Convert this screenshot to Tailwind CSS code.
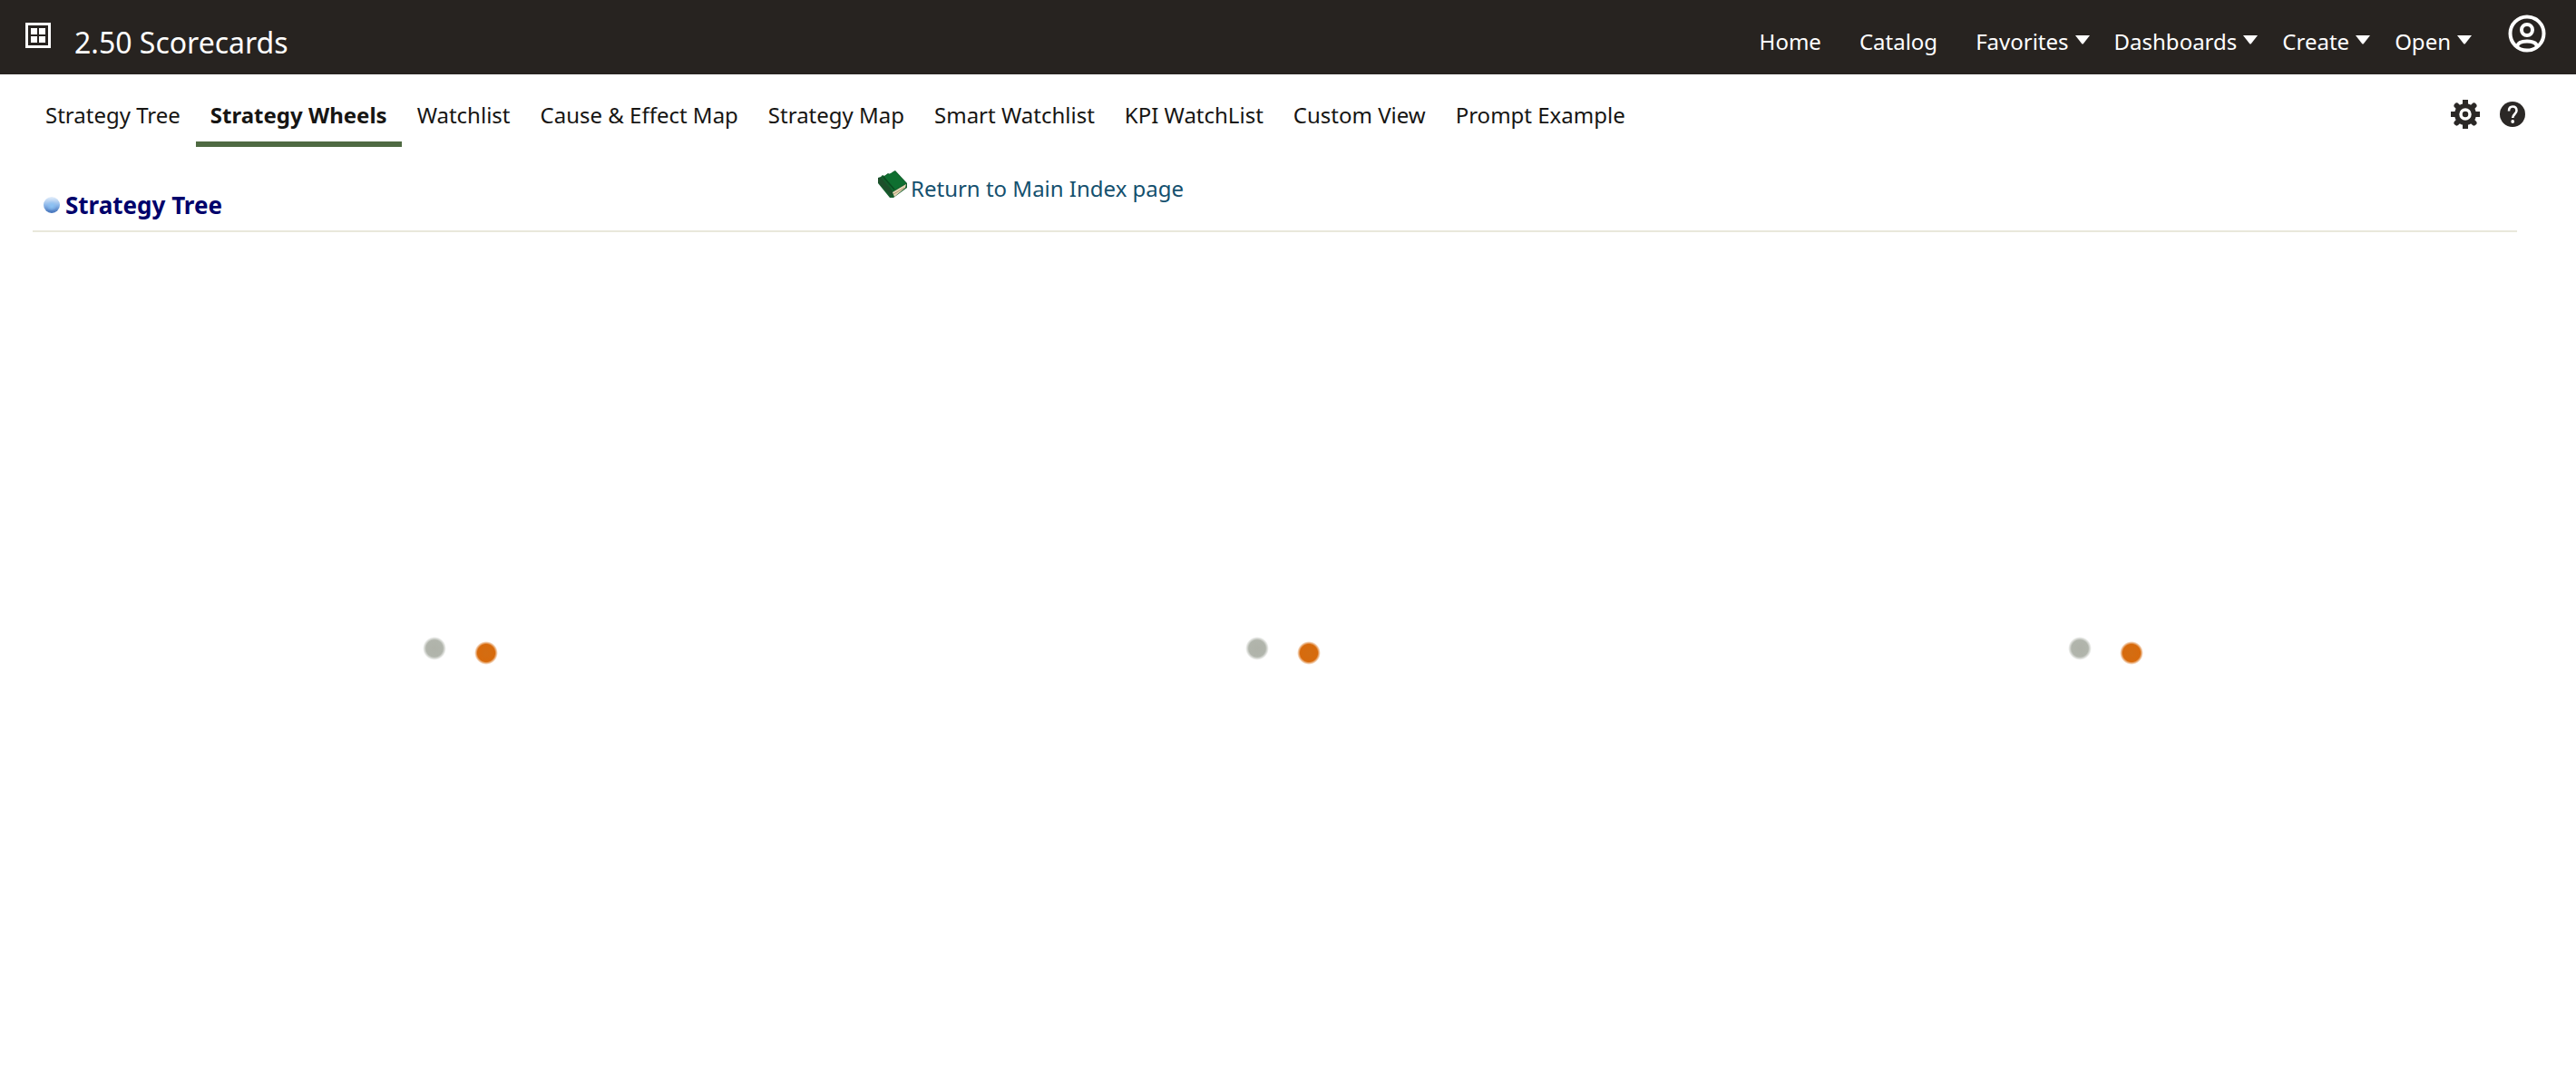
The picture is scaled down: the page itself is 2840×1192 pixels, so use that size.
<!DOCTYPE html>
<html lang="en">
<head>
<meta charset="UTF-8">
<meta name="viewport" content="width=device-width, initial-scale=1.0">
<title>2.50 Scorecards</title>
<script src="https://cdn.jsdelivr.net/npm/@tailwindcss/browser@4"></script>
</head>
<body class="min-h-screen flex flex-col bg-white text-[24px] leading-8 text-[#161513] font-['Noto_Sans',sans-serif]">

<!-- Header -->
<header class="h-[82px] flex items-start justify-between bg-[#272320] text-white pl-7 pr-[33px]">
  <div class="flex items-start">
    <button type="button" aria-label="Home" class="mt-[25px]">
      <svg class="size-[28px]" viewBox="0 0 28 28">
        <rect x="1.500" y="1.500" width="25" height="25" fill="none" stroke="#fff" stroke-width="3"/>
        <path d="M6 6h7v7H6zM15 6h7v7h-7zM6 15h7v7H6zM15 15h7v7h-7z" fill="#fff"/>
      </svg>
    </button>
    <h1 class="ml-[26px] mt-[27px] text-[32px] leading-10">2.50 Scorecards</h1>
  </div>
  <nav class="flex items-start">
    <a href="#" class="mt-[30px] mr-[42px]">Home</a>
    <a href="#" class="mt-[30px] mr-[42px]">Catalog</a>
    <button type="button" class="mt-[30px] mr-[27px] flex gap-[7px]">Favorites<svg class="w-4 h-[10px] mt-[9px]" viewBox="0 0 16 10"><path d="M0 0h16L9 9Q8 10 7 9Z" fill="#fff"/></svg></button>
    <button type="button" class="mt-[30px] mr-[27px] flex gap-[7px]">Dashboards<svg class="w-4 h-[10px] mt-[9px]" viewBox="0 0 16 10"><path d="M0 0h16L9 9Q8 10 7 9Z" fill="#fff"/></svg></button>
    <button type="button" class="mt-[30px] mr-[27px] flex gap-[7px]">Create<svg class="w-4 h-[10px] mt-[9px]" viewBox="0 0 16 10"><path d="M0 0h16L9 9Q8 10 7 9Z" fill="#fff"/></svg></button>
    <button type="button" class="mt-[30px] mr-[40px] flex gap-[7px]">Open<svg class="w-4 h-[10px] mt-[9px]" viewBox="0 0 16 10"><path d="M0 0h16L9 9Q8 10 7 9Z" fill="#fff"/></svg></button>
    <button type="button" aria-label="Account" class="mt-4">
      <svg class="size-[42px]" viewBox="0 0 42 42" fill="none" stroke="#fff" stroke-width="4">
        <circle cx="21" cy="21" r="18.500"/>
        <circle cx="21" cy="17" r="6"/>
        <path d="M10 35c1-4 5-5.500 11-5.500s10 1.500 11 5.500"/>
      </svg>
    </button>
  </nav>
</header>

<!-- Dashboard tabs -->
<div class="flex justify-between pl-[34px] pr-[54px]">
  <nav class="flex h-20 gap-px">
    <a href="#" class="px-4 pt-[29px]">Strategy Tree</a>
    <a href="#" class="px-4 pt-[29px] font-bold border-b-6 border-[#4f6a42]">Strategy Wheels</a>
    <a href="#" class="px-4 pt-[29px]">Watchlist</a>
    <a href="#" class="px-4 pt-[29px]">Cause &amp; Effect Map</a>
    <a href="#" class="px-4 pt-[29px]">Strategy Map</a>
    <a href="#" class="px-4 pt-[29px]">Smart Watchlist</a>
    <a href="#" class="px-4 pt-[29px]">KPI WatchList</a>
    <a href="#" class="px-4 pt-[29px]">Custom View</a>
    <a href="#" class="px-4 pt-[29px]">Prompt Example</a>
  </nav>
  <div class="flex items-start gap-5 pt-7">
    <button type="button" aria-label="Page options">
      <svg class="size-8" viewBox="0 0 32 32">
        <g stroke="#2b2826" stroke-width="6">
          <path d="M16 0v32M0 16h32"/>
          <path d="M6.500 6.500l19 19M25.500 6.500l-19 19" stroke-linecap="round"/>
        </g>
        <circle cx="16" cy="16" r="12" fill="#2b2826"/>
        <circle cx="16" cy="16" r="5" fill="#2b2826" stroke="#fff" stroke-width="3.500"/>
      </svg>
    </button>
    <button type="button" aria-label="Help">
      <svg class="size-8" viewBox="0 0 32 32">
        <circle cx="16" cy="16" r="14" fill="#2b2826"/>
        <path d="M12 12.500c0-3 1.500-5 4.200-5s4.300 1.800 4.300 4.500c0 3.500-4.300 4-4.300 8" fill="none" stroke="#fff" stroke-width="2.600"/>
        <circle cx="16.200" cy="24" r="1.900" fill="#fff"/>
      </svg>
    </button>
  </div>
</div>

<main class="flex-1 flex flex-col pl-9 pr-[65px]">
  <!-- Section heading -->
  <div class="grid grid-cols-3 h-[94px] pl-[18px] border-b-2 border-[#e9e8db]">
    <h2 class="-ml-[6px] flex items-center gap-[6px] pt-[36px] text-[26px] font-bold text-[#00006b]">
      <svg class="size-[18px]" viewBox="0 0 18 18">
        <defs>
          <linearGradient id="ball" x2="0" y2="1"><stop offset="0" stop-color="#e4effb"/><stop offset=".5" stop-color="#8fb9ea"/><stop offset="1" stop-color="#3f6fb8"/></linearGradient>
          <radialGradient id="glow" cy=".6"><stop offset="0" stop-color="#8cc4f5"/><stop offset="1" stop-color="#8cc4f5" stop-opacity="0"/></radialGradient>
        </defs>
        <circle cx="9" cy="9" r="9" fill="url(#ball)"/>
        <circle cx="9" cy="9" r="6" fill="url(#glow)"/>
      </svg>
      Strategy Tree
    </h2>
    <a href="#" class="flex items-start gap-1 pl-[7px] pt-[26px] text-[#14506e]">
      <svg class="w-8 h-[30px]" viewBox="0 0 32 30">
        <path d="M0 8l3-1 2-2 2 1 4-3 2 1 4-3 2-1 13 14v5L17 30h-4L0 14z" fill="#155c2c"/>
        <path d="M7 6L19 1l12 13-15 9z" fill="#0f6f30"/>
        <path d="M3 8l13 15-1 5L0 13V8z" fill="#1d4f2b"/>
        <path d="M6 7l12 14" stroke="#0b4a20" stroke-width="1.500"/>
        <path d="M16 24l15-9-1 4-12 10z" fill="#e6d6b6"/>
        <path d="M17 26l12-7" stroke="#b19b73"/>
      </svg>
      <span class="pt-1">Return to Main Index page</span>
    </a>
  </div>

  <!-- Scorecard views, still loading -->
  <div class="flex-1 grid grid-cols-3 place-items-center pl-[18px] pb-[14px]">
    <div role="status" aria-label="Loading" class="flex gap-[31px]">
      <span class="size-[26px] rounded-full bg-radial from-[#afb2a9] from-0% via-[#b1b5ac] via-50% to-[#b1b5ac]/0 to-70%"></span>
      <span class="size-[26px] mt-[5px] rounded-full bg-radial from-[#d36d12] from-0% via-[#d76a0c] via-52% to-[#e8963f]/0 to-70%"></span>
    </div>
    <div role="status" aria-label="Loading" class="flex gap-[31px]">
      <span class="size-[26px] rounded-full bg-radial from-[#afb2a9] from-0% via-[#b1b5ac] via-50% to-[#b1b5ac]/0 to-70%"></span>
      <span class="size-[26px] mt-[5px] rounded-full bg-radial from-[#d36d12] from-0% via-[#d76a0c] via-52% to-[#e8963f]/0 to-70%"></span>
    </div>
    <div role="status" aria-label="Loading" class="flex gap-[31px]">
      <span class="size-[26px] rounded-full bg-radial from-[#afb2a9] from-0% via-[#b1b5ac] via-50% to-[#b1b5ac]/0 to-70%"></span>
      <span class="size-[26px] mt-[5px] rounded-full bg-radial from-[#d36d12] from-0% via-[#d76a0c] via-52% to-[#e8963f]/0 to-70%"></span>
    </div>
  </div>
</main>

</body>
</html>
